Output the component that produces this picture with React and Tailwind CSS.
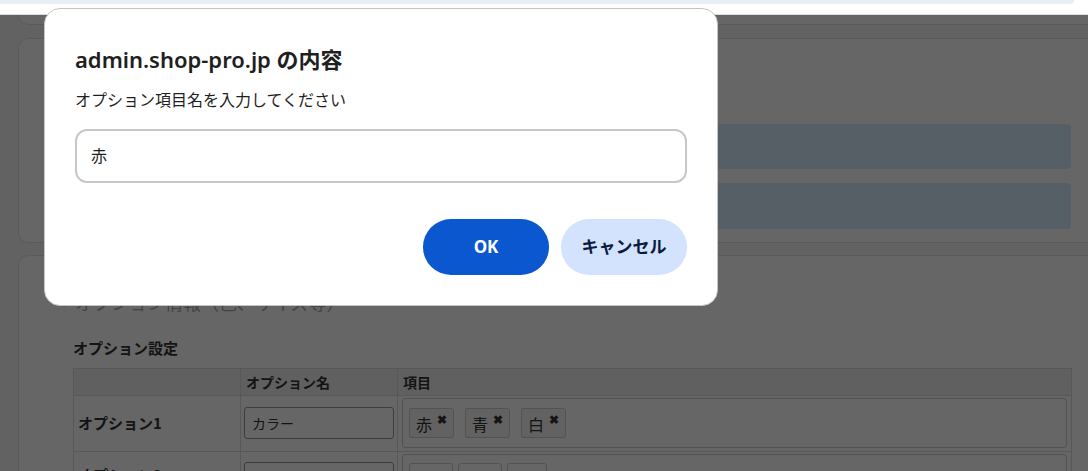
export default function App() {
  const tags = ['赤', '青', '白']

  return (
    <div
      className="relative h-[471px] w-[1088px] overflow-hidden bg-white"
      style={{ fontFamily: '"Noto Sans", "Noto Sans CJK JP", sans-serif' }}
    >
      {/* browser strip */}
      <div className="h-[15px] border-b border-[#dadce0] bg-white">
        <div className="h-[4px] w-[1074px] rounded-br-[8px] bg-[#e9eef6]" />
      </div>

      {/* page behind the dialog */}
      <div className="relative h-[456px] bg-[#f6f6f6] pl-[18px]">
        <div className="h-[10px] rounded-bl-[10px] border-b border-l border-[#e2e2e2] bg-white" />

        <div className="mt-[13px] h-[205px] rounded-l-[10px] border border-r-0 border-[#e2e2e2] bg-white pl-[40px] pr-[17px] pt-[85px]">
          <div className="h-[45px] rounded-[4px] bg-[#d7ebff]" />
          <div className="mt-[14px] h-[46px] rounded-[4px] bg-[#d7ebff]" />
        </div>

        <div
          className="mt-[12px] h-[240px] rounded-l-[10px] border border-r-0 border-[#e2e2e2] bg-white pl-[54px] pr-[16px] pt-[33px]"
          style={{ fontFamily: '"Noto Sans CJK JP", sans-serif' }}
        >
          <div className="flex items-center gap-[6px] text-[18px] text-[#aaa]">
            <span className="-ml-[14px] text-[10px]">▼</span>
            <span>オプション情報（色、サイズ等）</span>
          </div>

          <div className="mt-[21px] text-[15px] font-bold text-[#333]">
            オプション設定
          </div>

          <table className="mt-[8px] w-[999px] border-collapse text-[#333]">
            <thead>
              <tr className="h-[27px] bg-[#f0f0f0] text-left text-[14px] font-bold">
                <th className="w-[167px] border border-[#ddd]" />
                <th className="w-[157px] border border-[#ddd] px-[5px] leading-none">
                  オプション名
                </th>
                <th className="border border-[#ddd] px-[5px] leading-none">項目</th>
              </tr>
            </thead>
            <tbody>
              <tr className="h-[56px]">
                <td className="border border-[#ddd] px-[4px] text-[15px] font-bold">
                  オプション1
                </td>
                <td className="border border-[#ddd] px-[3px]">
                  <div className="flex h-[32px] w-[150px] items-center rounded-[3px] border border-[#999] px-[7px] text-[14px]">
                    カラー
                  </div>
                </td>
                <td className="border border-[#ddd] px-[4px]">
                  <div className="flex h-[50px] items-center gap-[11px] rounded-[3px] border border-[#ccc] px-[6px]">
                    {tags.map((t) => (
                      <div
                        key={t}
                        className="flex h-[30px] items-start gap-[5px] rounded-[3px] border border-[#ccc] bg-[#f5f5f5] pl-[6px] pr-[6px] pt-[4px]"
                      >
                        <span className="text-[16px] leading-[22px]">{t}</span>
                        <span className="text-[12px] font-bold leading-[12px]">✖</span>
                      </div>
                    ))}
                  </div>
                </td>
              </tr>
              <tr className="h-[56px] align-top">
                <td className="border border-[#ddd] px-[4px] pt-[12px] text-[15px] font-bold">
                  オプション2
                </td>
                <td className="border border-[#ddd] px-[3px] pt-[10px]">
                  <div className="h-[32px] w-[150px] rounded-[3px] border border-[#999]" />
                </td>
                <td className="border border-[#ddd] px-[4px] pt-[2px]">
                  <div className="flex h-[50px] gap-[5px] rounded-[3px] border border-[#ccc] px-[6px] pt-[8px]">
                    <div className="h-[30px] w-[44px] rounded-[3px] border border-[#ccc]" />
                    <div className="h-[30px] w-[44px] rounded-[3px] border border-[#ccc]" />
                    <div className="h-[30px] w-[40px] rounded-[3px] border border-[#ccc]" />
                  </div>
                </td>
              </tr>
            </tbody>
          </table>
        </div>

        {/* dim overlay */}
        <div className="absolute inset-0 bg-black/60" />
      </div>

      {/* prompt dialog */}
      <div className="absolute left-[44px] top-[8px] h-[298px] w-[674px] rounded-[16px] border border-[#c4c4c4] bg-white pl-[30px] pr-[30px] pt-[33px]">
        <div className="text-[22px] font-semibold leading-[34px] text-[#1f1f1f]">
          admin.shop-pro.jp の内容
        </div>
        <div className="mt-[12px] text-[16px] leading-[24px] text-[#1f1f1f]">
          オプション項目名を入力してください
        </div>
        <div className="mt-[17px] flex h-[54px] w-[612px] items-center rounded-[12px] border-2 border-[#c7c7c7] px-[14px] text-[16px] text-[#1f1f1f]">
          赤
        </div>
        <div className="mt-[36px] flex justify-end gap-[12px]">
          <button className="h-[56px] w-[126px] rounded-full bg-[#0b57d0] text-[17px] font-bold text-white">
            OK
          </button>
          <button className="h-[56px] w-[126px] rounded-full bg-[#d3e3fd] text-[17px] font-bold text-[#0a1b3d]">
            キャンセル
          </button>
        </div>
      </div>
    </div>
  )
}
